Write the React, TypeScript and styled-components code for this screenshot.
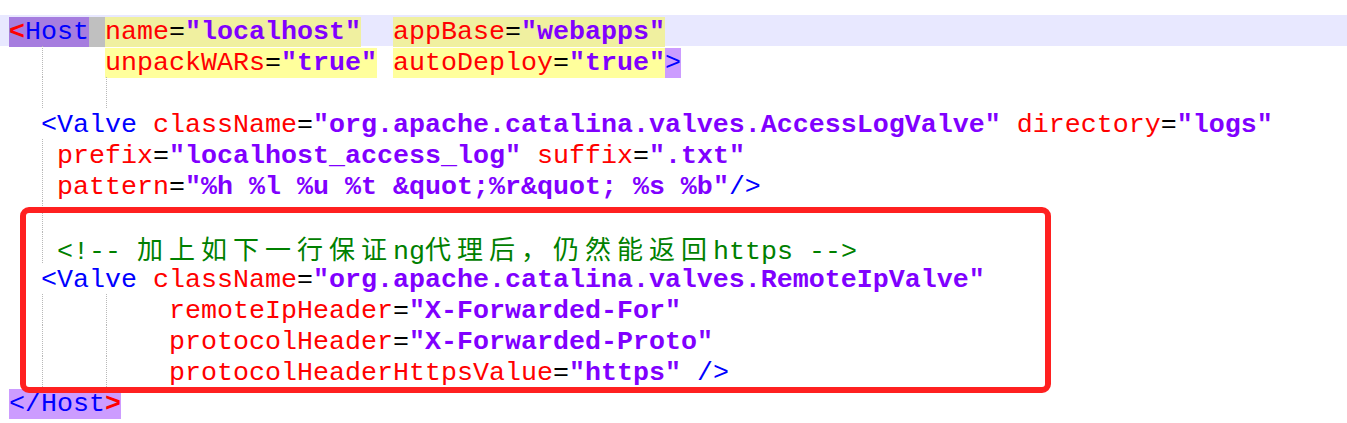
import React from 'react';
import styled, { createGlobalStyle, css } from 'styled-components';

const COL = 16;

const GlobalStyle = createGlobalStyle`
  html, body {
    margin: 0;
    padding: 0;
    background: #ffffff;
  }
`;

const Editor = styled.div`
  position: relative;
  width: 1347px;
  height: 423px;
  padding-top: 15px;
  box-sizing: border-box;
  background: #ffffff;
  font-family: "Liberation Mono", "Courier New", monospace;
  font-size: 26.667px;
  overflow: hidden;
`;

const Line = styled.div<{ $current?: boolean }>`
  height: 31px;
  line-height: 34px;
  padding-left: 9px;
  white-space: pre;
  background: ${p => (p.$current ? '#e8e8ff' : 'transparent')};
`;

const guideLayer = (cols: number[]) =>
  cols.length
    ? css`
        background-image: ${cols
          .map(() => 'repeating-linear-gradient(to bottom, #b8b8b8 0 1px, transparent 1px 2px)')
          .join(', ')};
        background-size: ${cols.map(() => '1px 100%').join(', ')};
        background-position: ${cols.map(c => `${c * COL + 1}px 0`).join(', ')};
        background-repeat: no-repeat;
      `
    : '';

const Indent = styled.span<{ $cols: number; $guides: number[] }>`
  display: inline-block;
  vertical-align: top;
  width: ${p => p.$cols * COL}px;
  height: 31px;
  ${p => guideLayer(p.$guides)}
`;

const tones: Record<string, string> = {
  tagCur: '#a67ddf',
  grey: '#c0c0c0',
  attrCur: '#f0f0a0',
  attr: '#ffff9c',
  tag: '#cc9cff',
};

const Mark = styled.span<{ $tone: string }>`
  background: ${p => tones[p.$tone]};
`;

const Tag = styled.span`
  color: #0000ff;
`;

const Brace = styled.span`
  color: #ff0000;
  font-weight: bold;
`;

const Attr = styled.span`
  color: #ff0000;
`;

const Eq = styled.span`
  color: #000000;
`;

const Val = styled.span`
  color: #8000ff;
  font-weight: bold;
`;

const Comment = styled.span`
  color: #008000;
`;

const Cjk = styled.span`
  display: inline-block;
  line-height: 31px;
  font-family: "Noto Sans CJK SC", "Liberation Mono", sans-serif;
  font-size: 26px;
  letter-spacing: 6px;
`;

const Annotation = styled.div`
  position: absolute;
  left: 20px;
  top: 207px;
  width: 1031px;
  height: 186px;
  box-sizing: border-box;
  border: 6px solid #ff2020;
  border-radius: 9px;
  pointer-events: none;
`;

const Pair: React.FC<{ name: string; value: string }> = ({ name, value }) => (
  <>
    <Attr>{name}</Attr>
    <Eq>=</Eq>
    <Val>"{value}"</Val>
  </>
);

const App: React.FC = () => (
  <>
    <GlobalStyle />
    <Editor>
      <Line $current>
        <Mark $tone="tagCur">
          <Brace>&lt;</Brace>
          <Tag>Host</Tag>
        </Mark>
        <Mark $tone="grey"> </Mark>
        <Mark $tone="attrCur">
          <Pair name="name" value="localhost" />
        </Mark>
        {'  '}
        <Mark $tone="attrCur">
          <Pair name="appBase" value="webapps" />
        </Mark>
      </Line>
      <Line>
        <Indent $cols={6} $guides={[2]} />
        <Mark $tone="attr">
          <Pair name="unpackWARs" value="true" />
        </Mark>
        {' '}
        <Mark $tone="attr">
          <Pair name="autoDeploy" value="true" />
        </Mark>
        <Mark $tone="tag">
          <Tag>&gt;</Tag>
        </Mark>
      </Line>
      <Line>
        <Indent $cols={7} $guides={[2, 6]} />
      </Line>
      <Line>
        <Indent $cols={2} $guides={[]} />
        <Tag>&lt;Valve</Tag> <Pair name="className" value="org.apache.catalina.valves.AccessLogValve" />{' '}
        <Pair name="directory" value="logs" />
      </Line>
      <Line>
        <Indent $cols={3} $guides={[2]} />
        <Pair name="prefix" value="localhost_access_log" /> <Pair name="suffix" value=".txt" />
      </Line>
      <Line>
        <Indent $cols={3} $guides={[2]} />
        <Pair name="pattern" value={'%h %l %u %t &quot;%r&quot; %s %b'} />
        <Tag>/&gt;</Tag>
      </Line>
      <Line>
        <Indent $cols={3} $guides={[2]} />
      </Line>
      <Line>
        <Indent $cols={3} $guides={[2]} />
        <Comment>
          {'<!-- '}
          <Cjk>加上如下一行保证</Cjk>ng<Cjk>代理后，仍然能返回</Cjk>https --&gt;
        </Comment>
      </Line>
      <Line>
        <Indent $cols={2} $guides={[]} />
        <Tag>&lt;Valve</Tag> <Pair name="className" value="org.apache.catalina.valves.RemoteIpValve" />
      </Line>
      <Line>
        <Indent $cols={10} $guides={[2, 6]} />
        <Pair name="remoteIpHeader" value="X-Forwarded-For" />
      </Line>
      <Line>
        <Indent $cols={10} $guides={[2, 6]} />
        <Pair name="protocolHeader" value="X-Forwarded-Proto" />
      </Line>
      <Line>
        <Indent $cols={10} $guides={[2, 6]} />
        <Pair name="protocolHeaderHttpsValue" value="https" /> <Tag>/&gt;</Tag>
      </Line>
      <Line>
        <Mark $tone="tag">
          <Tag>&lt;/Host</Tag>
          <Brace>&gt;</Brace>
        </Mark>
      </Line>
      <Annotation />
    </Editor>
  </>
);

export default App;
